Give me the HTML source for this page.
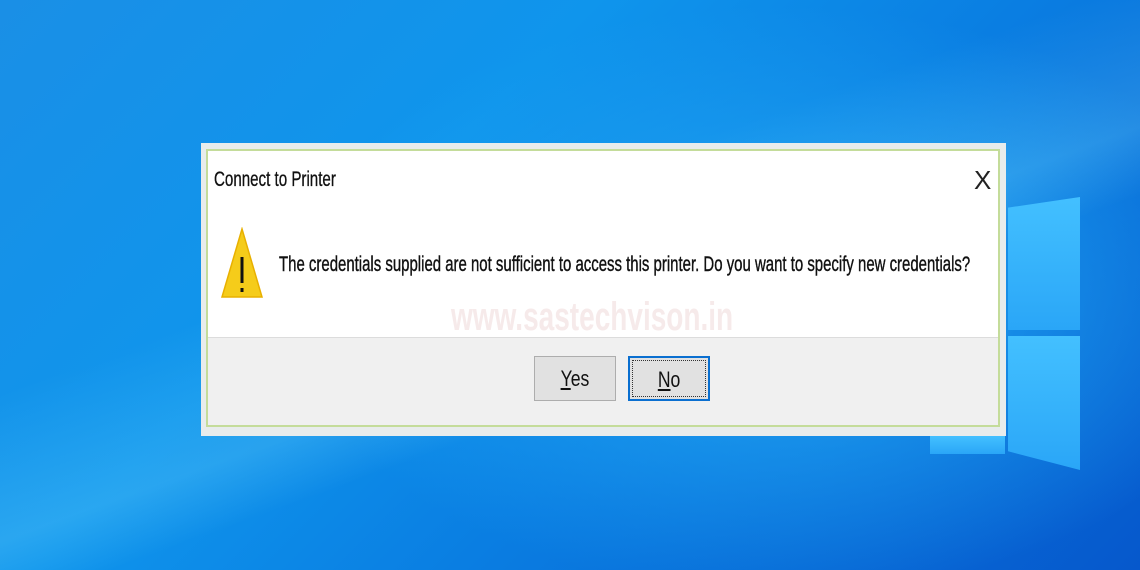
<!DOCTYPE html>
<html><head><style>
body{margin:0;width:1140px;height:570px;overflow:hidden;position:relative;font-family:"Liberation Sans",sans-serif;
background:
linear-gradient(160deg,rgba(255,255,255,0) 40%,rgba(120,220,255,0.25) 55%,rgba(255,255,255,0) 62%),
radial-gradient(ellipse 700px 420px at 780px 300px,#22a8f4 0%,rgba(30,160,240,0) 70%),
linear-gradient(135deg,#1a8fe6 0%,#0f95ec 35%,#0a7ee2 60%,#0658cc 100%);}
.pane{position:absolute;background:linear-gradient(180deg,#43c0ff,#2aa6f7);}
.dlg{position:absolute;left:201px;top:143px;width:805px;height:293px;background:#e8ecec;}
.in{position:absolute;left:5px;top:6px;width:794px;height:278px;border:2px solid #c4dc9a;background:#f0f0f0;box-sizing:border-box;}
.white{position:absolute;left:0;top:0;right:0;height:186px;background:#fff;border-bottom:1px solid #dcdcdc;}
.t{position:absolute;white-space:nowrap;transform-origin:0 0;color:#111;}
.btn{position:absolute;top:205px;width:82px;height:45px;background:#e1e1e1;border:1px solid #adadad;box-sizing:border-box;font-size:22px;text-align:center;line-height:43px;color:#111}
.btn span{display:inline-block;transform:scaleX(0.8)}
</style></head><body>
<div class="pane" style="left:1008px;top:197px;width:72px;height:133px;clip-path:polygon(0 8%,100% 0,100% 100%,0 100%)"></div>
<div class="pane" style="left:1008px;top:336px;width:72px;height:134px;clip-path:polygon(0 0,100% 0,100% 100%,0 86%)"></div>
<div class="pane" style="left:930px;top:436px;width:75px;height:18px;"></div>
<div class="dlg"><div class="in">
<div class="white">
<div class="t" style="left:6px;top:17px;font-size:21px;transform:scaleX(0.72);-webkit-text-stroke:0.3px #111">Connect to Printer</div>
<div class="t" style="left:766px;top:14px;font-size:26px;font-weight:300;color:#222">X</div>
<svg style="position:absolute;left:12px;top:76px" width="44" height="72" viewBox="0 0 44 72"><polygon points="22,2 42,70 2,70" fill="#f5cc1a" stroke="#e8b000" stroke-width="1.5"/><rect x="20.5" y="30" width="3" height="26" fill="#111"/><rect x="20.5" y="61" width="3" height="4" fill="#111"/></svg>
<div class="t" style="left:71px;top:102px;font-size:21px;transform:scaleX(0.712);-webkit-text-stroke:0.4px #111">The credentials supplied are not sufficient to access this printer. Do you want to specify new credentials?</div>
<div class="t" style="left:243px;top:144px;font-size:40px;font-weight:bold;color:#f6eaea;transform:scaleX(0.7)">www.sastechvison.in</div>
</div>
<div class="btn" style="left:326px"><span><u>Y</u>es</span></div>
<div class="btn" style="left:420px;border:2px solid #0a6fd0;outline:1px dotted #333;outline-offset:-5px"><span><u>N</u>o</span></div>
</div></div>
</body></html>
